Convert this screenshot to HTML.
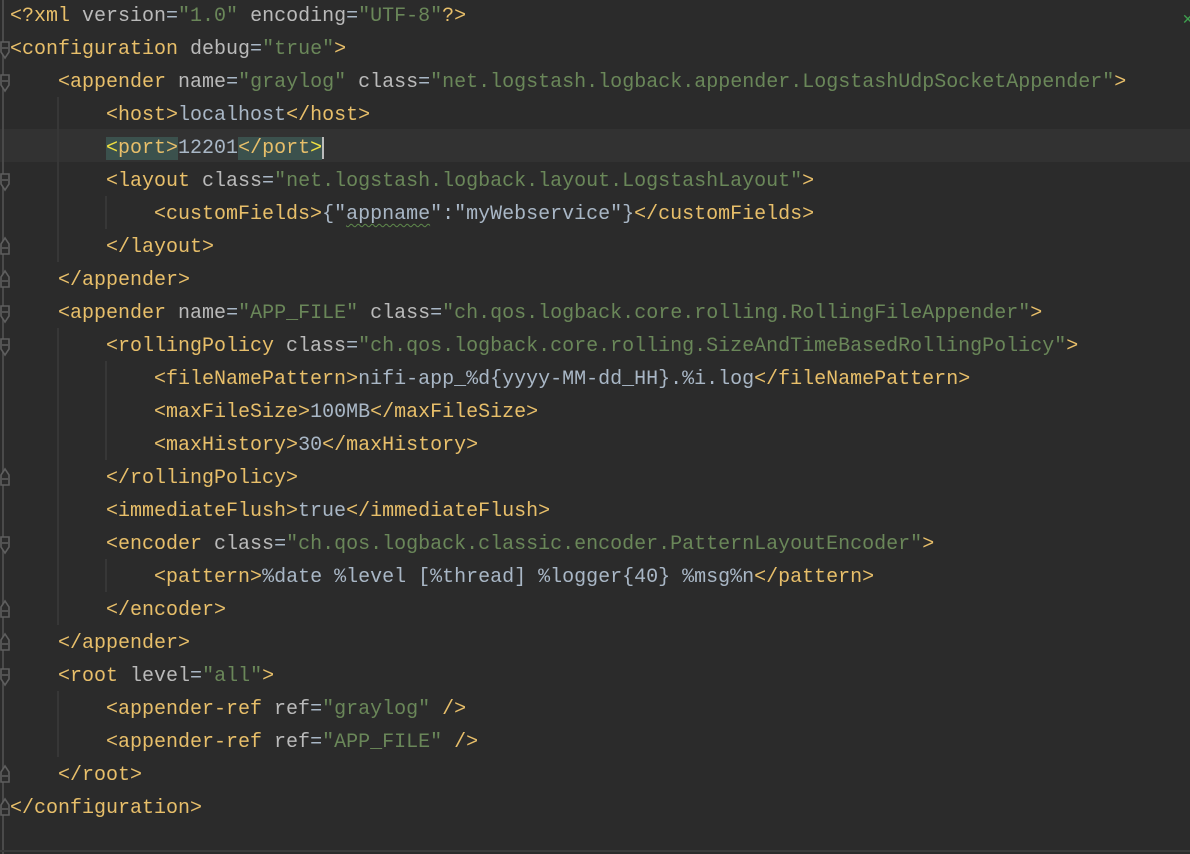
<!DOCTYPE html>
<html><head><meta charset="utf-8"><style>
html,body{margin:0;padding:0;background:#2b2b2b;width:1190px;height:854px;overflow:hidden;position:relative}
.l{position:absolute;left:10px;height:33px;line-height:33px;font-family:"Liberation Mono",monospace;font-size:20px;white-space:pre;color:#a9b7c6}
.t{color:#e8bf6a}.a{color:#bababa}.s{color:#6a8759}
.hl{background:#3b514d}
.cur{position:absolute;left:0;width:1190px;height:33px;background:#323232}
.g{position:absolute;width:2px;background:#373737}
.gut{position:absolute;left:2px;top:0;width:2px;height:854px;background:#4a4a4a}
.f{position:absolute;left:0}
.wavy{text-decoration:underline wavy #5f8a4c;text-underline-offset:4px;text-decoration-thickness:1px}
</style></head><body>
<div class="cur" style="top:129px"></div>
<div class="gut"></div>
<div style="position:absolute;left:0;top:850px;width:1190px;height:2px;background:#3a3a3a"></div>
<div class="g" style="left:57px;top:97px;height:165px"></div>
<div class="g" style="left:105px;top:196px;height:33px"></div>
<div class="g" style="left:57px;top:328px;height:297px"></div>
<div class="g" style="left:105px;top:361px;height:99px"></div>
<div class="g" style="left:105px;top:559px;height:33px"></div>
<div class="g" style="left:57px;top:691px;height:66px"></div>
<svg class="f" width="12" height="854" style="top:0">
<g fill="#2b2b2b" stroke="#5e5e5e" stroke-width="1.6">
<path d="M1 42h8v10l-4 6l-4-6z"/><path d="M1 75h8v10l-4 6l-4-6z"/><path d="M1 174h8v10l-4 6l-4-6z"/>
<path d="M1 306h8v10l-4 6l-4-6z"/><path d="M1 339h8v10l-4 6l-4-6z"/><path d="M1 537h8v10l-4 6l-4-6z"/>
<path d="M1 669h8v10l-4 6l-4-6z"/>
<path d="M1 254h8v-10l-4-6l-4 6z"/><path d="M1 287h8v-10l-4-6l-4 6z"/><path d="M1 485h8v-10l-4-6l-4 6z"/>
<path d="M1 617h8v-10l-4-6l-4 6z"/><path d="M1 650h8v-10l-4-6l-4 6z"/><path d="M1 782h8v-10l-4-6l-4 6z"/><path d="M1 815h8v-10l-4-6l-4 6z"/>
</g>
<g stroke="#5e5e5e" stroke-width="1.6"><path d="M2 48h6M2 81h6M2 180h6M2 312h6M2 345h6M2 543h6M2 675h6M2 248h6M2 281h6M2 479h6M2 611h6M2 644h6M2 776h6M2 809h6"/></g>
</svg>
<div style="position:absolute;left:1182px;top:12px;color:#3f9f4f;font:bold 14px 'DejaVu Sans',sans-serif">✕</div>
<div class="l" style="top:0px"><span class="t">&lt;?xml </span><span class="a">version</span>=<span class="s">"1.0"</span> <span class="a">encoding</span>=<span class="s">"UTF-8"</span><span class="t">?&gt;</span></div>
<div class="l" style="top:33px"><span class="t">&lt;configuration </span><span class="a">debug</span>=<span class="s">"true"</span><span class="t">&gt;</span></div>
<div class="l" style="top:66px">    <span class="t">&lt;appender </span><span class="a">name</span>=<span class="s">"graylog"</span> <span class="a">class</span>=<span class="s">"net.logstash.logback.appender.LogstashUdpSocketAppender"</span><span class="t">&gt;</span></div>
<div class="l" style="top:99px">        <span class="t">&lt;host&gt;</span>localhost<span class="t">&lt;/host&gt;</span></div>
<div class="l" style="top:132px">        <span class="t hl"><span style="color:#f0e040">&lt;</span>port&gt;</span>12201<span class="t hl">&lt;/port<span style="color:#f0e040">&gt;</span></span><span style="display:inline-block;width:2px;height:22px;background:#bbb;vertical-align:middle"></span></div>
<div class="l" style="top:165px">        <span class="t">&lt;layout </span><span class="a">class</span>=<span class="s">"net.logstash.logback.layout.LogstashLayout"</span><span class="t">&gt;</span></div>
<div class="l" style="top:198px">            <span class="t">&lt;customFields&gt;</span>{"<span class="wavy">appname</span>":"myWebservice"}<span class="t">&lt;/customFields&gt;</span></div>
<div class="l" style="top:231px">        <span class="t">&lt;/layout&gt;</span></div>
<div class="l" style="top:264px">    <span class="t">&lt;/appender&gt;</span></div>
<div class="l" style="top:297px">    <span class="t">&lt;appender </span><span class="a">name</span>=<span class="s">"APP_FILE"</span> <span class="a">class</span>=<span class="s">"ch.qos.logback.core.rolling.RollingFileAppender"</span><span class="t">&gt;</span></div>
<div class="l" style="top:330px">        <span class="t">&lt;rollingPolicy </span><span class="a">class</span>=<span class="s">"ch.qos.logback.core.rolling.SizeAndTimeBasedRollingPolicy"</span><span class="t">&gt;</span></div>
<div class="l" style="top:363px">            <span class="t">&lt;fileNamePattern&gt;</span>nifi-app_%d{yyyy-MM-dd_HH}.%i.log<span class="t">&lt;/fileNamePattern&gt;</span></div>
<div class="l" style="top:396px">            <span class="t">&lt;maxFileSize&gt;</span>100MB<span class="t">&lt;/maxFileSize&gt;</span></div>
<div class="l" style="top:429px">            <span class="t">&lt;maxHistory&gt;</span>30<span class="t">&lt;/maxHistory&gt;</span></div>
<div class="l" style="top:462px">        <span class="t">&lt;/rollingPolicy&gt;</span></div>
<div class="l" style="top:495px">        <span class="t">&lt;immediateFlush&gt;</span>true<span class="t">&lt;/immediateFlush&gt;</span></div>
<div class="l" style="top:528px">        <span class="t">&lt;encoder </span><span class="a">class</span>=<span class="s">"ch.qos.logback.classic.encoder.PatternLayoutEncoder"</span><span class="t">&gt;</span></div>
<div class="l" style="top:561px">            <span class="t">&lt;pattern&gt;</span>%date %level [%thread] %logger{40} %msg%n<span class="t">&lt;/pattern&gt;</span></div>
<div class="l" style="top:594px">        <span class="t">&lt;/encoder&gt;</span></div>
<div class="l" style="top:627px">    <span class="t">&lt;/appender&gt;</span></div>
<div class="l" style="top:660px">    <span class="t">&lt;root </span><span class="a">level</span>=<span class="s">"all"</span><span class="t">&gt;</span></div>
<div class="l" style="top:693px">        <span class="t">&lt;appender-ref </span><span class="a">ref</span>=<span class="s">"graylog"</span> <span class="t">/&gt;</span></div>
<div class="l" style="top:726px">        <span class="t">&lt;appender-ref </span><span class="a">ref</span>=<span class="s">"APP_FILE"</span> <span class="t">/&gt;</span></div>
<div class="l" style="top:759px">    <span class="t">&lt;/root&gt;</span></div>
<div class="l" style="top:792px"><span class="t">&lt;/configuration&gt;</span></div>
</body></html>
